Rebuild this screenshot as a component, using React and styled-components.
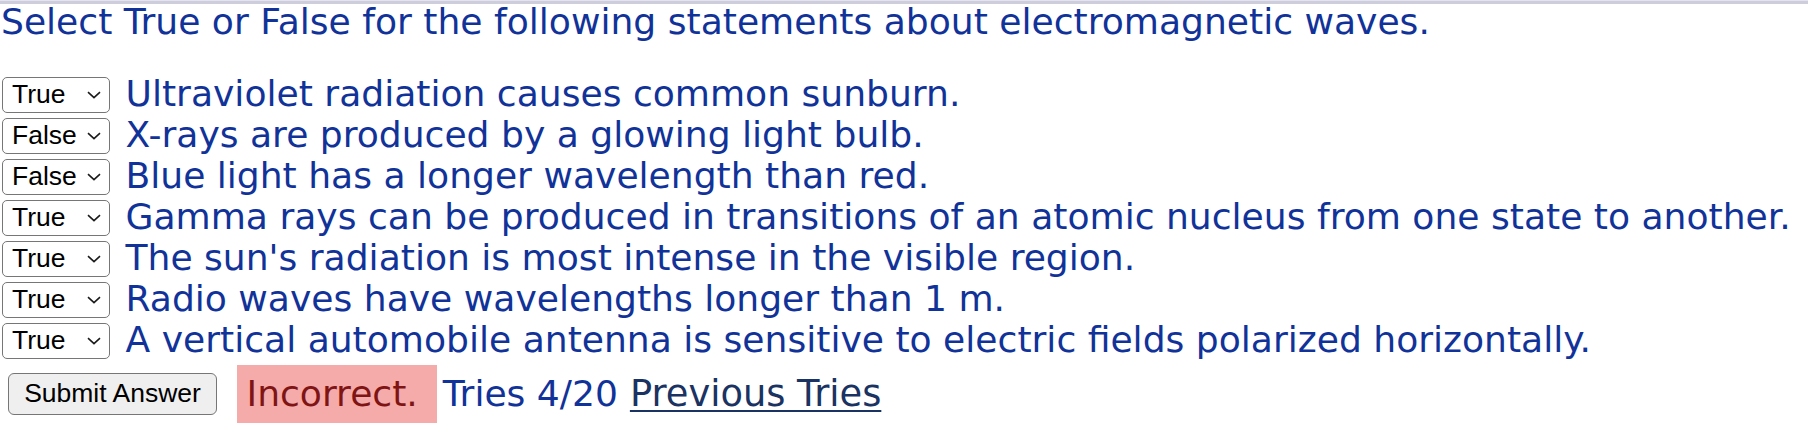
import styled, { createGlobalStyle } from "styled-components";

const GlobalStyle = createGlobalStyle`
  html, body {
    margin: 0;
    padding: 0;
    background: #ffffff;
  }
  body {
    font-family: "DejaVu Sans", Verdana, sans-serif;
    color: #113399;
  }
`;

const TopRule = styled.div`
  height: 3px;
  border-top: 1px solid #e3e3f1;
  background: #cdcddb;
`;

const Page = styled.div`
  padding-left: 2px;
  font-size: 36.1px;
`;

const Heading = styled.div`
  line-height: 37px;
  margin: 0 0 32.5px -1px;
`;

const Statements = styled.div`
  display: flex;
  flex-direction: column;
`;

const Row = styled.div`
  display: flex;
  align-items: baseline;
  gap: 15.5px;
  height: 41px;
  line-height: 41px;
  white-space: nowrap;
`;

const SelectWrap = styled.span`
  position: relative;
  display: inline-flex;
  align-self: center;
  margin-top: 1px;
`;

const Select = styled.select`
  appearance: none;
  -webkit-appearance: none;
  width: 108px;
  height: 36px;
  box-sizing: border-box;
  padding: 0 0 0 9px;
  border: 1.5px solid #767676;
  border-radius: 5px;
  background: #ffffff;
  color: #000000;
  font-family: "Liberation Sans", Arial, sans-serif;
  font-size: 26.5px;
  line-height: 33px;
`;

const Chevron = styled.svg`
  position: absolute;
  right: 9px;
  top: 14px;
  width: 14px;
  height: 8px;
  pointer-events: none;
`;

const Footer = styled.div`
  display: flex;
  align-items: center;
  margin-top: 4px;
  white-space: nowrap;
`;

const SubmitButton = styled.button`
  width: 209px;
  height: 42px;
  margin: 0 19.5px 0 6px;
  box-sizing: border-box;
  border: 1.5px solid #767676;
  border-radius: 6px;
  background: #efefef;
  color: #000000;
  font-family: "Liberation Sans", Arial, sans-serif;
  font-size: 26.5px;
  padding: 0;
`;

const Verdict = styled.span`
  background: #f4abaa;
  color: #7f1414;
  padding: 8px 19px 8px 10px;
`;

const Tries = styled.span`
  margin-left: 6px;
  margin-right: 12px;
`;

const PrevLink = styled.a`
  color: #1a3362;
  font-size: 36.8px;
  text-decoration: underline;
  text-decoration-thickness: 2px;
  text-underline-offset: 4px;
  cursor: pointer;
`;

const statements = [
  ["True", "Ultraviolet radiation causes common sunburn."],
  ["False", "X-rays are produced by a glowing light bulb."],
  ["False", "Blue light has a longer wavelength than red."],
  ["True", "Gamma rays can be produced in transitions of an atomic nucleus from one state to another."],
  ["True", "The sun's radiation is most intense in the visible region."],
  ["True", "Radio waves have wavelengths longer than 1 m."],
  ["True", "A vertical automobile antenna is sensitive to electric fields polarized horizontally."],
];

function TrueFalse({ value }) {
  return (
    <SelectWrap>
      <Select defaultValue={value}>
        <option value="True">True</option>
        <option value="False">False</option>
      </Select>
      <Chevron viewBox="0 0 14 8">
        <path d="M1 1.2 L7 6.6 L13 1.2" fill="none" stroke="#1a1a1a" strokeWidth="1.6" />
      </Chevron>
    </SelectWrap>
  );
}

export default function App() {
  return (
    <>
      <GlobalStyle />
      <TopRule />
      <Page>
        <Heading>Select True or False for the following statements about electromagnetic waves.</Heading>
        <Statements>
          {statements.map(([value, text], i) => (
            <Row key={i}>
              <TrueFalse value={value} />
              <span>{text}</span>
            </Row>
          ))}
        </Statements>
        <Footer>
          <SubmitButton>Submit Answer</SubmitButton>
          <Verdict>Incorrect.</Verdict>
          <Tries>Tries 4/20</Tries>
          <PrevLink>Previous Tries</PrevLink>
        </Footer>
      </Page>
    </>
  );
}
